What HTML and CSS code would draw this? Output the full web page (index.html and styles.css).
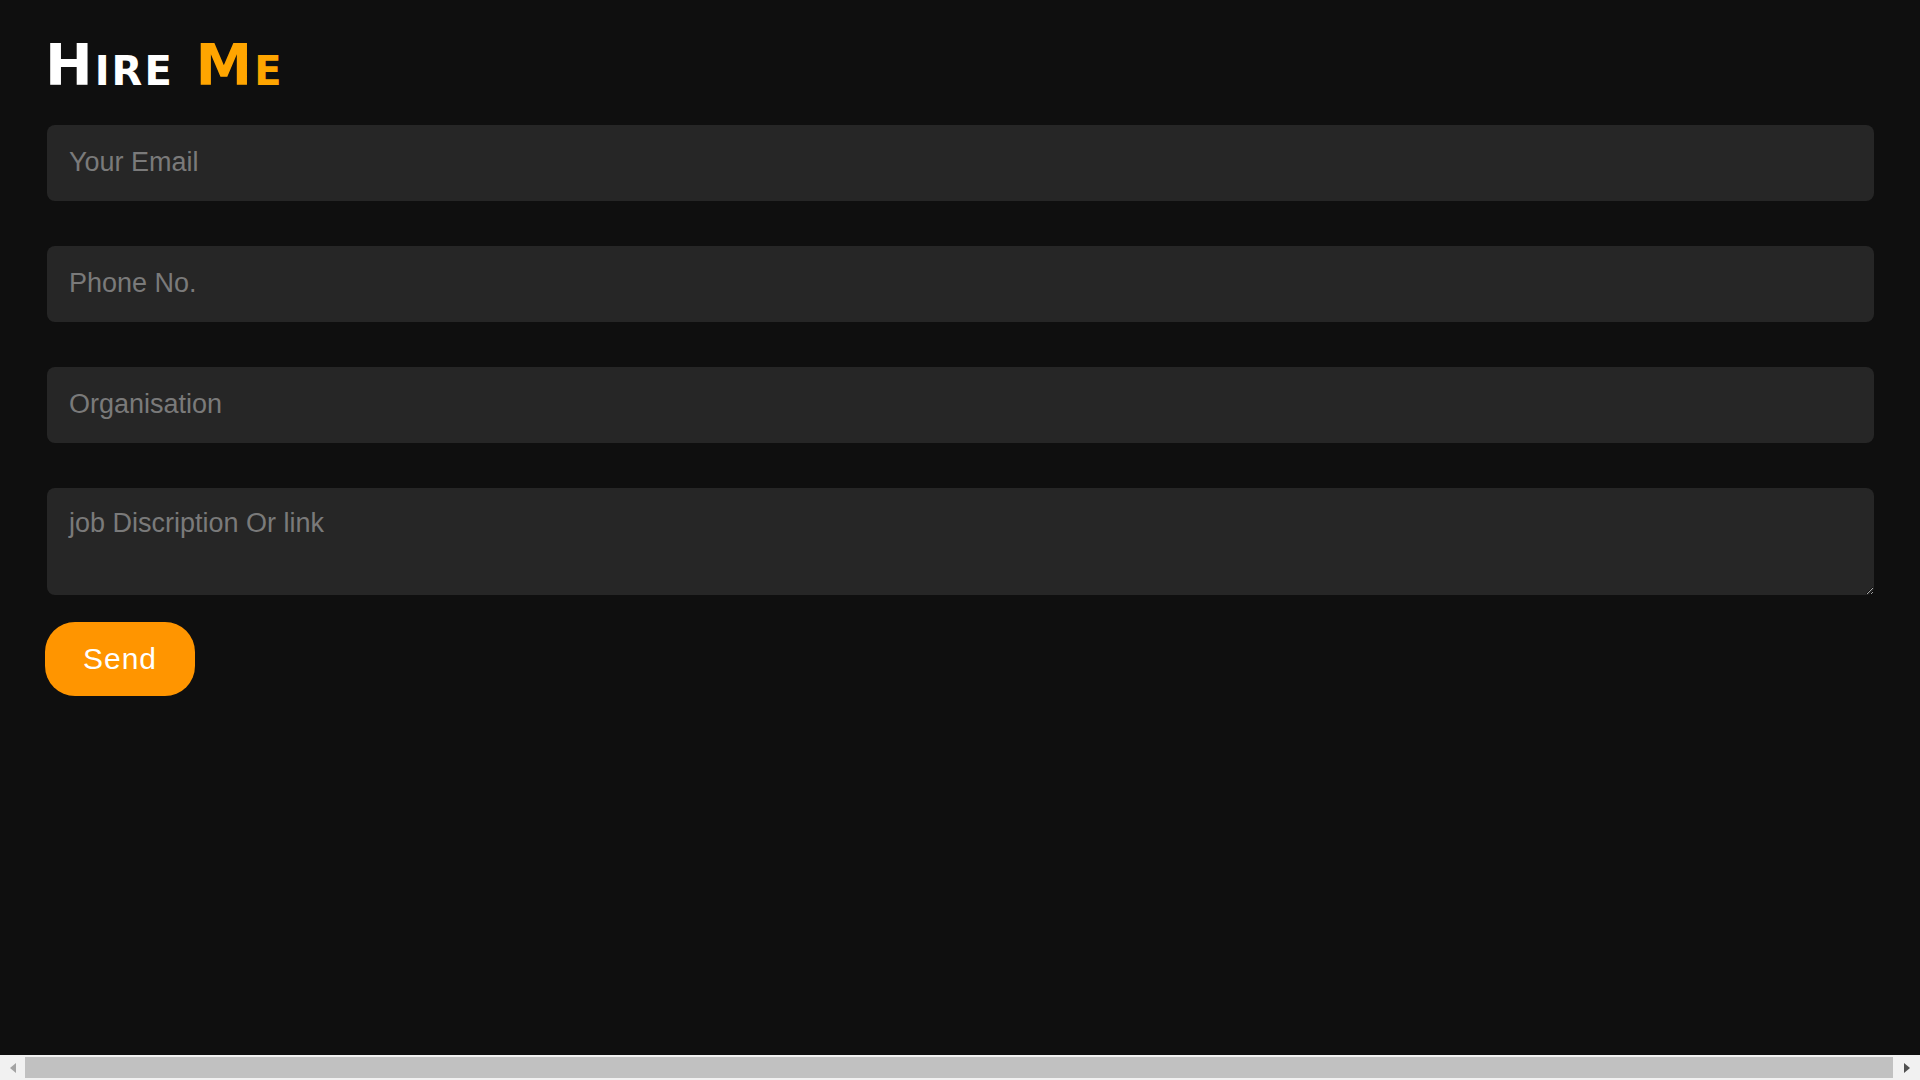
FILE: index.html
```html
<!DOCTYPE html>
<html lang="en">
<head>
    <meta charset="UTF-8">
    <meta name="viewport" content="width=device-width, initial-scale=1.0">
    <title>Hire Me</title>
    <link rel="stylesheet" href="styles.css">
</head>
<body>
    <section class="contact">
        <h1 class="contact-title">Hire <span class="accent">Me</span></h1>
        <form class="contact-form" onsubmit="return false">
            <input class="field" type="email" placeholder="Your Email">
            <input class="field" type="text" placeholder="Phone No.">
            <input class="field" type="text" placeholder="Organisation">
            <textarea class="field field-area" placeholder="job Discription Or link"></textarea>
            <button class="send-btn" type="submit">Send</button>
        </form>
    </section>

    <!-- horizontal scrollbar as it shows in the screenshot -->
    <div class="scrollbar">
        <div class="sb-arrow">
            <svg width="6" height="10" viewBox="0 0 6 10"><path d="M6 0V10L0 5Z" fill="#a3a3a3"/></svg>
        </div>
        <div class="sb-thumb"></div>
        <div class="sb-arrow sb-arrow-right">
            <svg width="6" height="10" viewBox="0 0 6 10"><path d="M0 0V10L6 5Z" fill="#505050"/></svg>
        </div>
    </div>
</body>
</html>
```

FILE: styles.css
```css
html, body {
    margin: 0;
    background-color: #0f0f0f;
}
body {
    font-family: "Liberation Sans", Arial, sans-serif;
    color: white;
}
.contact {
    padding: 32px 46px 0 45px;
}
.contact-title {
    margin: 0 0 27px;
    font-family: "DejaVu Sans", Verdana, sans-serif;
    font-size: 57px;
    font-weight: bold;
    font-variant: small-caps;
    letter-spacing: 2px;
    line-height: normal;
}
.accent {
    color: #ffa500;
}
.contact-form {
    display: flex;
    flex-direction: column;
    align-items: flex-start;
}
.field {
    box-sizing: border-box;
    width: calc(100% - 2px);
    height: 76px;
    margin: 0 0 45px 2px;
    padding: 0 22px 2px;
    border: none;
    border-radius: 8px;
    background-color: #262626;
    color: #ddd;
    font-family: inherit;
    font-size: 27px;
    outline: none;
}
.field::placeholder {
    color: #7a7a7a;
}
.field-area {
    height: 107px;
    margin-bottom: 27px;
    padding: 20px 22px;
    resize: vertical;
}
.send-btn {
    width: 150px;
    height: 74px;
    padding: 0;
    border: none;
    border-radius: 30px;
    background-color: #ff9500;
    color: white;
    font-family: inherit;
    font-size: 30px;
    letter-spacing: 1px;
    cursor: pointer;
}
.scrollbar {
    position: fixed;
    left: 0;
    right: 0;
    bottom: 0;
    height: 25px;
    display: flex;
    align-items: center;
    background-color: #f1f1f1;
}
.sb-arrow {
    width: 25px;
    display: flex;
    justify-content: center;
}
.sb-arrow-right {
    width: 27px;
}
.sb-thumb {
    flex: 1;
    height: 21px;
    background-color: #c1c1c1;
}
```
